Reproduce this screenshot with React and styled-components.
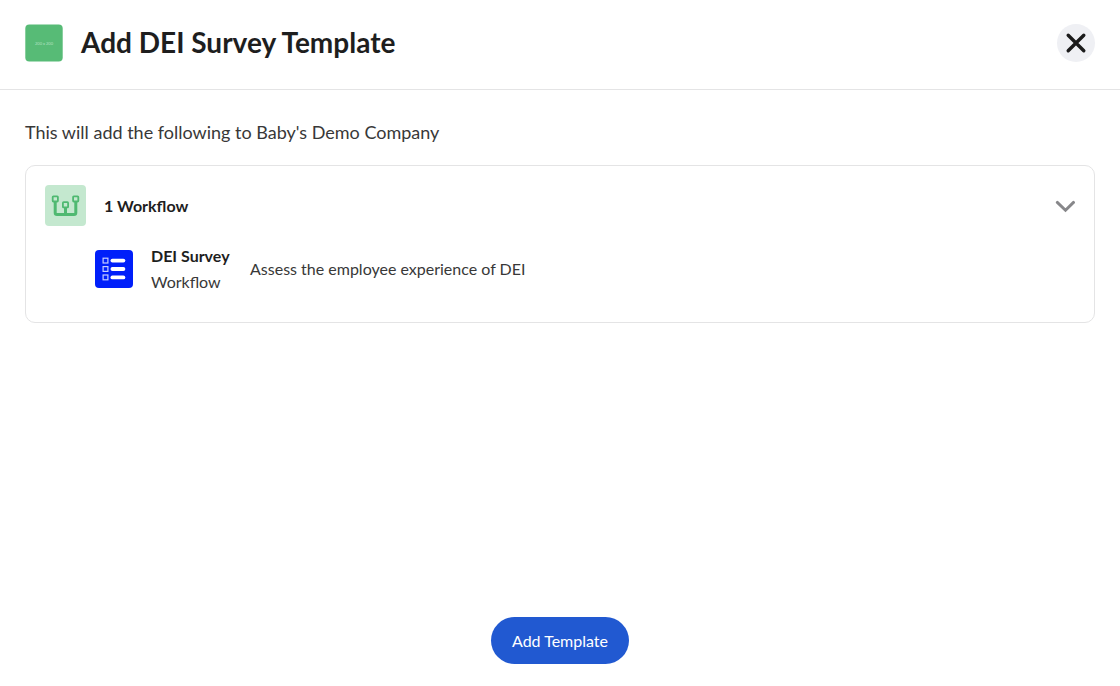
import React, { useState } from "react";
import styled, { createGlobalStyle } from "styled-components";

const GlobalStyle = createGlobalStyle`
  *, *::before, *::after { box-sizing: border-box; }
  body {
    margin: 0;
    background: #fff;
    color: #1e1e1e;
    font-family: Lato, "Liberation Sans", sans-serif;
    font-size: 16px;
    line-height: 24px;
  }
  button { font: inherit; color: inherit; border: 0; padding: 0; cursor: pointer; }
`;

const Page = styled.div`
  display: flex;
  flex-direction: column;
  min-height: 100vh;
`;

const Header = styled.header`
  display: flex;
  align-items: flex-start;
  gap: 18px;
  padding: 24px 25px 27px;
  border-bottom: 1px solid #e4e4e5;
`;

const Title = styled.h1`
  flex: 1;
  margin: 0;
  font-size: 28px;
  line-height: 36px;
  font-weight: 700;
`;

const CloseButton = styled.button`
  display: grid;
  place-items: center;
  width: 38px;
  height: 38px;
  border-radius: 50%;
  background: #eff0f4;
`;

const Icon = styled.svg`
  display: block;
  flex: none;
`;

const Main = styled.main`
  flex: 1;
  padding: 30px 25px;
`;

const Intro = styled.p`
  margin: 0 0 21px;
  font-size: 18px;
  color: #383838;
`;

const Card = styled.section`
  padding: 19px 19px 28px;
  border: 1px solid #e4e4e5;
  border-radius: 10px;
`;

const CardToggle = styled.button`
  display: flex;
  align-items: center;
  gap: 18px;
  width: 100%;
  background: none;
  text-align: left;
`;

const CardTitle = styled.span`
  flex: 1;
  font-weight: 700;
`;

const ItemList = styled.ul`
  list-style: none;
  margin: 18px 0 0;
  padding: 0 0 0 50px;
`;

const Item = styled.li`
  display: flex;
  align-items: center;
  gap: 18px;
`;

const ItemName = styled.div`
  display: flex;
  flex-direction: column;
  gap: 2px;
  min-width: 81px;
`;

const Strong = styled.strong`
  font-weight: 700;
`;

const ItemText = styled.span`
  color: #383838;
`;

const Footer = styled.footer`
  display: flex;
  justify-content: center;
  padding: 0 25px 22px;
`;

const PrimaryButton = styled.button`
  height: 47px;
  && { padding: 0 21px; color: #fff; }
  border-radius: 24px;
  background: #2159d1;
`;

const TemplateImage = () => (
  <Icon width="38" height="38" viewBox="0 0 38 38" role="img" aria-label="Template">
    <rect x="0.3" y="0.5" width="37.4" height="37" rx="4" fill="#57bb76" />
    <text x="19" y="20.5" textAnchor="middle" fontSize="4" fill="#b5e2c2">200 x 200</text>
  </Icon>
);

const CloseIcon = () => (
  <Icon width="38" height="38" viewBox="0 0 38 38" aria-hidden="true">
    <path d="M11.2 11.2l15.6 15.6M26.8 11.2L11.2 26.8" stroke="#1b1b1b" strokeWidth="3.4" strokeLinecap="round" />
  </Icon>
);

const WorkflowIcon = () => (
  <Icon width="41" height="41" viewBox="0 0 41 41" aria-hidden="true">
    <rect width="41" height="41" rx="4" fill="#c4e8cf" />
    <g fill="none" stroke="#4fb971">
      <path d="M10.2 17v10.7q0 1.8 1.8 1.8h17q1.8 0 1.8-1.8V17M20.5 23v6" strokeWidth="3" />
      <g fill="#c4e8cf" strokeWidth="1.8">
        <rect x="7.7" y="11.3" width="5.2" height="5.2" rx="0.7" />
        <rect x="28.1" y="11.3" width="5.2" height="5.2" rx="0.7" />
        <rect x="17.9" y="17.2" width="5.2" height="5.2" rx="0.7" />
      </g>
    </g>
  </Icon>
);

const SurveyIcon = () => (
  <Icon width="38" height="38" viewBox="0 0 38 38" aria-hidden="true">
    <rect width="38" height="38" rx="4" fill="#001ffa" />
    {[10.6, 19, 27.4].map((y) => (
      <g key={y}>
        <rect x="8.1" y={y - 2.4} width="4.8" height="4.8" fill="none" stroke="#c5ccff" strokeWidth="1.2" />
        <rect x="15.5" y={y - 1.9} width="14.8" height="3.8" rx="1.9" fill="#fff" />
      </g>
    ))}
  </Icon>
);

const Chevron = () => (
  <Icon width="20" height="20" viewBox="0 0 20 20" aria-hidden="true">
    <path d="M2.3 6.4L10.5 14.2l8-7.8" fill="none" stroke="#87878a" strokeWidth="2.9" strokeLinecap="round" />
  </Icon>
);

export default function App() {
  const [open, setOpen] = useState(true);
  return (
    <>
      <GlobalStyle />
      <Page>
        <Header>
          <TemplateImage />
          <Title>Add DEI Survey Template</Title>
          <CloseButton type="button" aria-label="Close"><CloseIcon /></CloseButton>
        </Header>
        <Main>
          <Intro>This will add the following to Baby's Demo Company</Intro>
          <Card>
            <CardToggle type="button" aria-expanded={open} onClick={() => setOpen(!open)}>
              <WorkflowIcon />
              <CardTitle>1 Workflow</CardTitle>
              <Chevron />
            </CardToggle>
            {open && (
              <ItemList>
                <Item>
                  <SurveyIcon />
                  <ItemName>
                    <Strong>DEI Survey</Strong>
                    <ItemText>Workflow</ItemText>
                  </ItemName>
                  <ItemText>Assess the employee experience of DEI</ItemText>
                </Item>
              </ItemList>
            )}
          </Card>
        </Main>
        <Footer>
          <PrimaryButton type="button">Add Template</PrimaryButton>
        </Footer>
      </Page>
    </>
  );
}
